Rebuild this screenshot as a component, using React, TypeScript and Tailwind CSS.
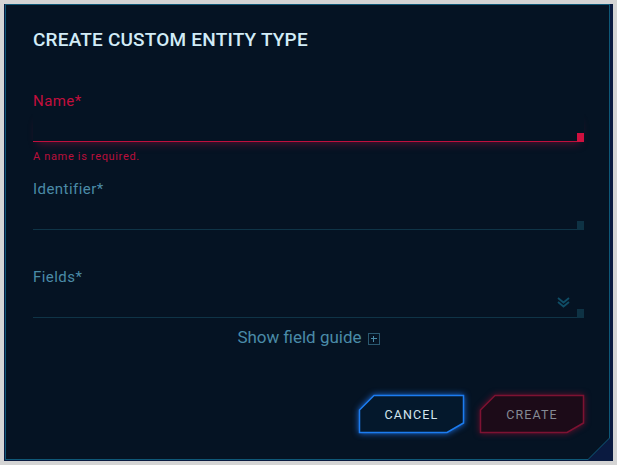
import React from 'react';

const font = { fontFamily: 'Roboto, "Noto Sans", sans-serif' };

interface FieldProps {
  label: string;
  error?: boolean;
  select?: boolean;
  className?: string;
}

const Field: React.FC<FieldProps> = ({ label, error, select, className }) => (
  <div className={className}>
    <div className={`text-[15px] leading-[20px] tracking-[0.03em] ${error ? 'text-[#c30f3d]' : 'text-[#4b8ba7]'}`}>
      {label}
    </div>
    <div
      className={`relative h-[31px] border-b ${
        error
          ? 'border-[#c0103e] shadow-[0_6px_8px_-4px_rgba(200,16,62,0.35)]'
          : 'border-[#0f3447]'
      }`}
    >
      {select && (
        <svg
          className="absolute right-[14px] bottom-[9px]"
          width="13"
          height="11"
          viewBox="0 0 13 11"
          fill="none"
          stroke="#0f4d66"
          strokeWidth="1.8"
        >
          <path d="M1 1l5.5 4.5L12 1" />
          <path d="M1 5l5.5 4.5L12 5" />
        </svg>
      )}
      <div
        className={`absolute right-0 bottom-[-1px] w-[7px] h-[9px] ${error ? 'bg-[#d0103f]' : 'bg-[#0e3244]'}`}
      />
    </div>
  </div>
);

const Chamfer: React.FC<{ stroke: string; fill: string; glow: string; w: number }> = ({ stroke, fill, glow, w }) => (
  <svg
    className="absolute inset-0 overflow-visible"
    style={{ filter: `drop-shadow(0 0 3px ${glow})` }}
    width={w}
    height="38"
    viewBox={`0 0 ${w} 38`}
  >
    <polygon
      points={`0.5,15 15,0.5 ${w - 0.5},0.5 ${w - 0.5},28 ${w - 17},37.5 0.5,37.5`}
      fill={fill}
      stroke={stroke}
      strokeWidth="1.5"
    />
  </svg>
);

export default function App() {
  return (
    <div className="min-h-screen bg-[#d4d4d4] p-[4px]" style={font}>
      <div className="w-[609px] h-[457px] bg-[#0a1a40] pl-[1px]">
        <div className="w-[605px] h-[456px] bg-[#0f5877] p-[1px] [clip-path:polygon(0_0,100%_0,100%_calc(100%_-_22px),calc(100%_-_22px)_100%,0_100%)]">
          <div className="h-full bg-[#051323] pt-[21px] pl-[27px] pr-[25px] flex flex-col [clip-path:polygon(0_0,100%_0,100%_calc(100%_-_21px),calc(100%_-_21px)_100%,0_100%)]">
            <h1 className="text-[19px] leading-[28px] font-medium tracking-[0.01em] text-[#d2ecf7]">
              CREATE CUSTOM ENTITY TYPE
            </h1>

            <Field label="Name*" error className="mt-[37px]" />
            <div className="mt-[7px] text-[11px] leading-[16px] tracking-[0.06em] text-[#bb0f3b]">
              A name is required.
            </div>

            <Field label="Identifier*" className="mt-[14px]" />
            <Field label="Fields*" select className="mt-[37px]" />

            <div className="mt-[7px] flex items-center justify-center gap-[6px] text-[17px] leading-[24px] text-[#4a8ba8]">
              <span>Show field guide</span>
              <span className="mt-[3px] w-[12px] h-[12px] border border-[#2a5870] relative flex items-center justify-center">
                <span className="absolute w-[6px] h-[1px] bg-[#4a8ba8]" />
                <span className="absolute w-[1px] h-[6px] bg-[#4a8ba8]" />
              </span>
            </div>

            <div className="mt-[46px] flex justify-end gap-[16px]">
              <button className="relative w-[105px] h-[38px]">
                <Chamfer w={105} stroke="#1c7cf0" fill="#04182c" glow="#1c6fe0" />
                <span className="relative text-[12.5px] tracking-[0.09em] text-[#d4e6f0]">CANCEL</span>
              </button>
              <button className="relative w-[104px] h-[38px]">
                <Chamfer w={104} stroke="#7d1232" fill="#1c0b18" glow="#6a0f2a" />
                <span className="relative text-[12.5px] tracking-[0.09em] text-[#858a94]">CREATE</span>
              </button>
            </div>
          </div>
        </div>
      </div>
    </div>
  );
}
